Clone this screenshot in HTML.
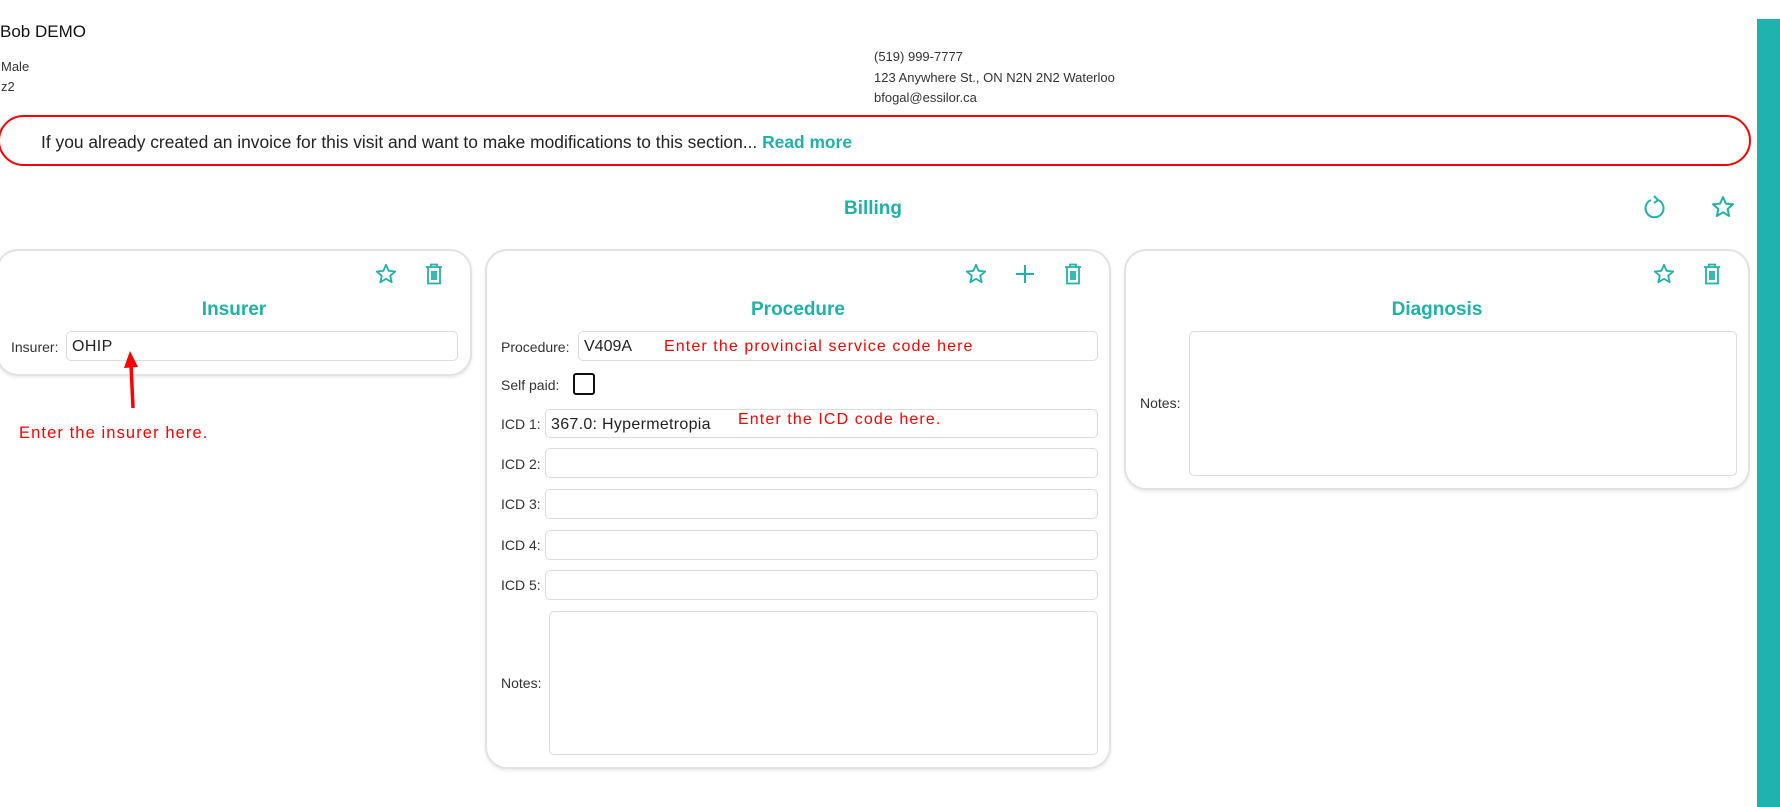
<!DOCTYPE html>
<html><head><meta charset="utf-8"><style>
*{box-sizing:border-box;margin:0;padding:0}
body{width:1780px;height:807px;position:relative;overflow:hidden;background:#fff;font-family:"Liberation Sans",sans-serif;color:#222}
.a{position:absolute;white-space:nowrap}
.teal{color:#20b2aa}
.card{position:absolute;border:2px solid #e2e2e2;border-radius:22px;background:#fff;box-shadow:0 2px 3px rgba(0,0,0,.08)}
.inp{position:absolute;border:1px solid #dcdcdc;border-radius:5px;background:#fff}
.lbl{position:absolute;font-size:14px;color:#333;white-space:nowrap}
.title{position:absolute;font-size:19px;font-weight:bold;color:#20b2aa;transform:translateX(-50%);white-space:nowrap}
.red{color:#f00;letter-spacing:1.1px}
svg{position:absolute}
</style></head><body>
<div class="a" style="left:0;top:22px;font-size:17px;color:#111">Bob DEMO</div>
<div class="a" style="left:1px;top:59px;font-size:13px;color:#333">Male</div>
<div class="a" style="left:1px;top:79px;font-size:13px;color:#333">z2</div>
<div class="a" style="left:874px;top:49px;font-size:13px;color:#333">(519) 999-7777</div>
<div class="a" style="left:874px;top:70px;font-size:13px;color:#333">123 Anywhere St., ON N2N 2N2 Waterloo</div>
<div class="a" style="left:874px;top:90px;font-size:13px;color:#333">bfogal@essilor.ca</div>

<div style="position:absolute;left:-2px;top:115px;width:1753px;height:51px;border:2px solid #f00;border-radius:26px"></div>
<div class="a" style="left:41px;top:132px;font-size:17.4px;color:#222">If you already created an invoice for this visit and want to make modifications to this section... <b class="teal">Read more</b></div>

<div class="title" style="left:873px;top:198px">Billing</div>
<svg style="left:1643px;top:195px" width="24" height="26" viewBox="0 0 24 26"><path d="M15 5 A9 9 0 1 1 8 5" fill="none" stroke="#20b2aa" stroke-width="2"/><path d="M11 1 L15 5 L11 8" fill="none" stroke="#20b2aa" stroke-width="2"/></svg>
<svg style="left:1711px;top:195px" width="24" height="24" viewBox="0 0 24 24"><path d="M12 2 L14.9 8.6 L22 9.3 L16.6 14 L18.2 21 L12 17.3 L5.8 21 L7.4 14 L2 9.3 L9.1 8.6 Z" fill="none" stroke="#20b2aa" stroke-width="2" stroke-linejoin="round"/></svg>

<div style="position:absolute;left:1757px;top:19px;width:23px;height:788px;background:#1fb3af"></div>

<!-- Insurer -->
<div class="card" style="left:-4px;top:249px;width:476px;height:127px"></div>
<svg style="left:375px;top:263px" width="22" height="22" viewBox="0 0 24 24"><path d="M12 2 L14.9 8.6 L22 9.3 L16.6 14 L18.2 21 L12 17.3 L5.8 21 L7.4 14 L2 9.3 L9.1 8.6 Z" fill="none" stroke="#20b2aa" stroke-width="2" stroke-linejoin="round"/></svg>
<svg style="left:424px;top:263px" width="20" height="22" viewBox="0 0 20 22"><path d="M2 4 H18 M7 4 V1.5 H13 V4 M4 4 V20.5 H16 V4 M8 8 V17 M10 8 V17 M12 8 V17" fill="none" stroke="#20b2aa" stroke-width="1.8"/></svg>
<div class="title" style="left:234px;top:299px">Insurer</div>
<div class="lbl" style="left:11px;top:339px">Insurer:</div>
<div class="inp" style="left:66px;top:331px;width:392px;height:30px"></div>
<div class="a" style="left:72px;top:338px;font-size:16px;color:#222;letter-spacing:0.4px">OHIP</div>
<svg style="left:118px;top:348px" width="30" height="62" viewBox="0 0 30 62"><path d="M15 60 L13 16" stroke="#f00" stroke-width="3.5"/><path d="M6 20 L12 3 L20 19 Z" fill="#f00"/></svg>
<div class="a red" style="left:19px;top:424px;font-size:16.5px">Enter the insurer here.</div>

<!-- Procedure -->
<div class="card" style="left:485px;top:249px;width:626px;height:520px"></div>
<svg style="left:965px;top:263px" width="22" height="22" viewBox="0 0 24 24"><path d="M12 2 L14.9 8.6 L22 9.3 L16.6 14 L18.2 21 L12 17.3 L5.8 21 L7.4 14 L2 9.3 L9.1 8.6 Z" fill="none" stroke="#20b2aa" stroke-width="2" stroke-linejoin="round"/></svg>
<svg style="left:1015px;top:264px" width="20" height="20" viewBox="0 0 20 20"><path d="M10 1 V19 M1 10 H19" stroke="#20b2aa" stroke-width="2"/></svg>
<svg style="left:1063px;top:263px" width="20" height="22" viewBox="0 0 20 22"><path d="M2 4 H18 M7 4 V1.5 H13 V4 M4 4 V20.5 H16 V4 M8 8 V17 M10 8 V17 M12 8 V17" fill="none" stroke="#20b2aa" stroke-width="1.8"/></svg>
<div class="title" style="left:798px;top:299px">Procedure</div>
<div class="lbl" style="left:501px;top:339px">Procedure:</div>
<div class="inp" style="left:578px;top:331px;width:520px;height:30px"></div>
<div class="a" style="left:584px;top:338px;font-size:16px;color:#222">V409A</div>
<div class="a red" style="left:664px;top:338px;font-size:16px">Enter the provincial service code here</div>
<div class="lbl" style="left:501px;top:377px">Self paid:</div>
<div style="position:absolute;left:573px;top:373px;width:22px;height:22px;border:2.5px solid #111;border-radius:3px"></div>
<div class="lbl" style="left:501px;top:416px">ICD 1:</div>
<div class="inp" style="left:545px;top:409px;width:553px;height:29px"></div>
<div class="a" style="left:551px;top:416px;font-size:16px;color:#222;letter-spacing:0.3px">367.0: Hypermetropia</div>
<div class="a red" style="left:738px;top:411px;font-size:16px">Enter the ICD code here.</div>
<div class="lbl" style="left:501px;top:456px">ICD 2:</div>
<div class="inp" style="left:545px;top:448px;width:553px;height:30px"></div>
<div class="lbl" style="left:501px;top:496px">ICD 3:</div>
<div class="inp" style="left:545px;top:489px;width:553px;height:30px"></div>
<div class="lbl" style="left:501px;top:537px">ICD 4:</div>
<div class="inp" style="left:545px;top:530px;width:553px;height:30px"></div>
<div class="lbl" style="left:501px;top:577px">ICD 5:</div>
<div class="inp" style="left:545px;top:570px;width:553px;height:30px"></div>
<div class="lbl" style="left:501px;top:675px">Notes:</div>
<div class="inp" style="left:549px;top:611px;width:549px;height:144px"></div>

<!-- Diagnosis -->
<div class="card" style="left:1124px;top:249px;width:626px;height:241px"></div>
<svg style="left:1653px;top:263px" width="22" height="22" viewBox="0 0 24 24"><path d="M12 2 L14.9 8.6 L22 9.3 L16.6 14 L18.2 21 L12 17.3 L5.8 21 L7.4 14 L2 9.3 L9.1 8.6 Z" fill="none" stroke="#20b2aa" stroke-width="2" stroke-linejoin="round"/></svg>
<svg style="left:1702px;top:263px" width="20" height="22" viewBox="0 0 20 22"><path d="M2 4 H18 M7 4 V1.5 H13 V4 M4 4 V20.5 H16 V4 M8 8 V17 M10 8 V17 M12 8 V17" fill="none" stroke="#20b2aa" stroke-width="1.8"/></svg>
<div class="title" style="left:1437px;top:299px">Diagnosis</div>
<div class="lbl" style="left:1140px;top:395px">Notes:</div>
<div class="inp" style="left:1189px;top:331px;width:548px;height:145px"></div>
</body></html>
